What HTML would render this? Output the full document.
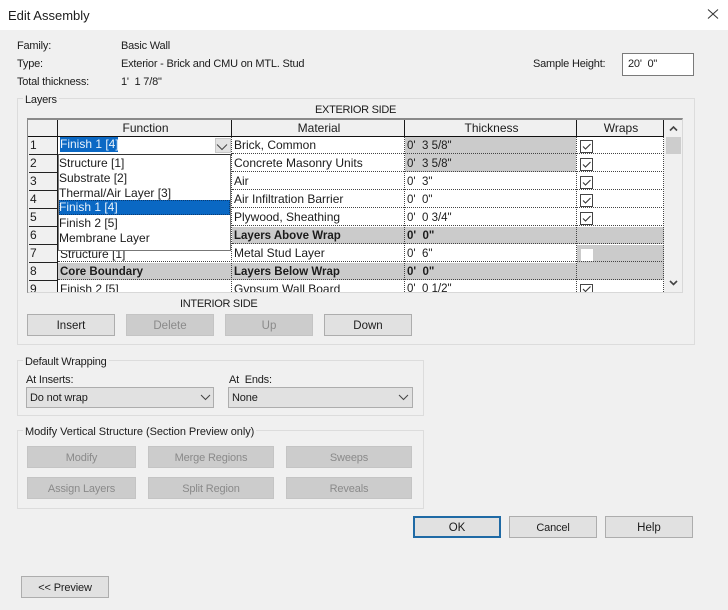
<!DOCTYPE html>
<html><head><meta charset="utf-8">
<style>
html,body{margin:0;padding:0}
body{width:728px;height:610px;overflow:hidden;position:relative;background:#f0f0f0;font-family:"Liberation Sans",sans-serif;font-size:11px;color:#1c1c1c}
div{position:absolute;box-sizing:border-box}
.t{white-space:nowrap;line-height:16px;height:16px;letter-spacing:-.2px}
.h{font-size:12px;line-height:14px;height:14px;letter-spacing:0;text-align:center}
.g{border:1px solid #dcdcdc}
.l{background:#f0f0f0;padding:0 2px 0 2px}
.b{background:#e1e1e1;border:1px solid #adadad;text-align:center;line-height:22px;height:22px;white-space:nowrap;letter-spacing:-.15px}
.d{background:#cccccc;border:1px solid #c4c4c4;color:#8a8a8a;text-align:center;line-height:22px;height:22px;white-space:nowrap;letter-spacing:-.15px}
.m{font-size:11.5px;letter-spacing:0}
.r{height:18px;border-bottom:1px dotted #444}
.cell{line-height:19px;height:17px;white-space:nowrap;font-size:12px}
.th{font-size:11.5px;line-height:21px}
.bd{font-weight:bold;font-size:11.5px;line-height:21px}
.v{background:#1a1a1a;width:1px}
.vd{border-left:1px dotted #444;width:1px}
.cb{left:580px;width:13px;height:13px;border:1px solid #444;background:#fff}
svg{position:absolute;left:0;top:0}
</style></head><body>
<div style="left:0;top:0;width:728px;height:30px;background:#fff"></div>
<div class="t" style="left:8px;top:7px;font-size:13px;line-height:17px;height:17px;letter-spacing:0">Edit Assembly</div>
<svg style="left:707px;top:8px" width="14" height="14"><path d="M1 1.5 L11 10.5 M11 1.5 L1 10.5" stroke="#333" stroke-width="1" fill="none"/></svg>

<div class="t" style="left:17px;top:38px">Family:</div>
<div class="t" style="left:121px;top:38px">Basic Wall</div>
<div class="t" style="left:17px;top:56px">Type:</div>
<div class="t" style="left:121px;top:56px">Exterior - Brick and CMU on MTL. Stud</div>
<div class="t" style="left:17px;top:74px">Total thickness:</div>
<div class="t" style="left:121px;top:74px">1'&nbsp; 1 7/8"</div>
<div class="t" style="left:533px;top:56px">Sample Height:</div>
<div style="left:622px;top:53px;width:72px;height:23px;background:#fff;border:1px solid #7a7a7a"></div>
<div class="t" style="left:628px;top:56px">20'&nbsp; 0"</div>

<div class="g" style="left:17px;top:98px;width:678px;height:247px"></div>
<div class="t l" style="left:23px;top:92px">Layers</div>
<div class="t" style="left:315px;top:102px;letter-spacing:-.3px">EXTERIOR SIDE</div>

<!-- table -->
<div style="left:27px;top:118px;width:656px;height:175px;background:#fff;border:1px solid #d8d8d8;border-top:2px solid #8a8a8a;border-left:2px solid #8a8a8a"></div>
<div style="left:28px;top:120px;width:636px;height:16px;background:#f0f0f0"></div>
<div style="left:28px;top:136px;width:636px;height:1px;background:#111"></div>
<div style="left:28px;top:137px;width:30px;height:155px;background:#f0f0f0"></div>
<div style="left:664px;top:120px;width:18px;height:172px;background:#f0f0f0"></div>
<div style="left:666px;top:137px;width:15px;height:17px;background:#cdcdcd"></div>
<svg style="left:668px;top:124px" width="12" height="10"><path d="M2 6.5 L5.5 3 L9 6.5" stroke="#444" stroke-width="1.6" fill="none"/></svg>
<svg style="left:668px;top:278px" width="12" height="10"><path d="M2 3 L5.5 6.5 L9 3" stroke="#444" stroke-width="1.6" fill="none"/></svg>

<!-- gray fills -->
<div style="left:405px;top:137px;width:171px;height:35px;background:#cbcbcb"></div>
<div style="left:232px;top:227px;width:432px;height:17px;background:#cbcbcb"></div>
<div style="left:58px;top:263px;width:606px;height:17px;background:#cbcbcb"></div>
<div style="left:577px;top:245px;width:87px;height:18px;background:#cbcbcb"></div>

<!-- row lines -->
<div class="r" style="left:232px;top:136px;width:432px"></div>
<div class="r" style="left:232px;top:154px;width:432px"></div>
<div class="r" style="left:232px;top:172px;width:432px"></div>
<div class="r" style="left:232px;top:190px;width:432px"></div>
<div class="r" style="left:232px;top:208px;width:432px"></div>
<div class="r" style="left:232px;top:226px;width:432px"></div>
<div class="r" style="left:58px;top:244px;width:606px"></div>
<div class="r" style="left:58px;top:262px;width:606px"></div>
<div style="left:58px;top:154px;width:174px;height:1px;background:#444"></div>

<!-- row number lines -->
<div style="left:29px;top:154px;width:29px;height:1px;background:#222"></div>
<div style="left:29px;top:172px;width:29px;height:1px;background:#222"></div>
<div style="left:29px;top:190px;width:29px;height:1px;background:#222"></div>
<div style="left:29px;top:208px;width:29px;height:1px;background:#222"></div>
<div style="left:29px;top:226px;width:29px;height:1px;background:#222"></div>
<div style="left:29px;top:244px;width:29px;height:1px;background:#222"></div>
<div style="left:29px;top:262px;width:29px;height:1px;background:#222"></div>
<div style="left:29px;top:280px;width:29px;height:1px;background:#222"></div>

<!-- vertical lines -->
<div class="v" style="left:57px;top:120px;height:172px"></div>
<div class="v" style="left:231px;top:120px;height:17px"></div>
<div class="v" style="left:404px;top:120px;height:17px"></div>
<div class="v" style="left:576px;top:120px;height:17px"></div>
<div class="v" style="left:663px;top:120px;height:17px"></div>
<div class="vd" style="left:231px;top:137px;height:155px"></div>
<div class="vd" style="left:404px;top:137px;height:155px"></div>
<div class="vd" style="left:576px;top:137px;height:155px"></div>
<div class="vd" style="left:663px;top:137px;height:155px"></div>

<!-- headers -->
<div class="t h" style="left:59px;top:121px;width:173px">Function</div>
<div class="t h" style="left:233px;top:121px;width:172px">Material</div>
<div class="t h" style="left:406px;top:121px;width:171px">Thickness</div>
<div class="t h" style="left:578px;top:121px;width:86px">Wraps</div>

<!-- numbers -->
<div class="cell" style="left:30px;top:136px">1</div>
<div class="cell" style="left:30px;top:154px">2</div>
<div class="cell" style="left:30px;top:172px">3</div>
<div class="cell" style="left:30px;top:190px">4</div>
<div class="cell" style="left:30px;top:208px">5</div>
<div class="cell" style="left:30px;top:226px">6</div>
<div class="cell" style="left:30px;top:244px">7</div>
<div class="cell" style="left:30px;top:262px">8</div>
<div style="left:29px;top:281px;width:28px;height:11px;overflow:hidden"><div class="cell" style="left:1px;top:-1px">9</div></div>

<!-- function col -->
<div class="cell" style="left:60px;top:245px">Structure [1]</div>
<div class="cell bd" style="left:60px;top:262px">Core Boundary</div>
<div style="left:58px;top:281px;width:170px;height:11px;overflow:hidden"><div class="cell" style="left:2px;top:-1px">Finish 2 [5]</div></div>

<!-- material col -->
<div class="cell" style="left:234px;top:136px">Brick, Common</div>
<div class="cell" style="left:234px;top:154px">Concrete Masonry Units</div>
<div class="cell" style="left:234px;top:172px">Air</div>
<div class="cell" style="left:234px;top:190px">Air Infiltration Barrier</div>
<div class="cell" style="left:234px;top:208px">Plywood, Sheathing</div>
<div class="cell bd" style="left:234px;top:226px">Layers Above Wrap</div>
<div class="cell" style="left:234px;top:244px">Metal Stud Layer</div>
<div class="cell bd" style="left:234px;top:262px">Layers Below Wrap</div>
<div style="left:232px;top:281px;width:170px;height:11px;overflow:hidden"><div class="cell" style="left:2px;top:-1px">Gypsum Wall Board</div></div>

<!-- thickness col -->
<div class="cell th" style="left:407px;top:136px">0'&nbsp; 3 5/8"</div>
<div class="cell th" style="left:407px;top:154px">0'&nbsp; 3 5/8"</div>
<div class="cell th" style="left:407px;top:172px">0'&nbsp; 3"</div>
<div class="cell th" style="left:407px;top:190px">0'&nbsp; 0"</div>
<div class="cell th" style="left:407px;top:208px">0'&nbsp; 0 3/4"</div>
<div class="cell bd" style="left:407px;top:226px">0'&nbsp; 0"</div>
<div class="cell th" style="left:407px;top:244px">0'&nbsp; 6"</div>
<div class="cell bd" style="left:407px;top:262px">0'&nbsp; 0"</div>
<div style="left:405px;top:281px;width:170px;height:11px;overflow:hidden"><div class="cell th" style="left:2px;top:-2px">0'&nbsp; 0 1/2"</div></div>

<!-- checkboxes -->
<div class="cb" style="top:140px"></div>
<div class="cb" style="top:158px"></div>
<div class="cb" style="top:176px"></div>
<div class="cb" style="top:194px"></div>
<div class="cb" style="top:212px"></div>
<div style="left:581px;top:249px;width:12px;height:12px;background:#fff"></div>
<div style="left:580px;top:284px;width:13px;height:8px;border:1px solid #444;border-bottom:0;background:#fff"></div>
<svg style="left:580px;top:140px" width="14" height="153"><g stroke="#333" stroke-width="1.1" fill="none"><path d="M3 6.5 L5.5 9 L10.5 4"/><path d="M3 24.5 L5.5 27 L10.5 22"/><path d="M3 42.5 L5.5 45 L10.5 40"/><path d="M3 60.5 L5.5 63 L10.5 58"/><path d="M3 78.5 L5.5 81 L10.5 76"/><path d="M3 149 L5.5 151.5 L10.5 146.5"/></g></svg>

<!-- active function cell -->
<div style="left:58px;top:137px;width:173px;height:17px;background:#fff"></div>
<div style="left:60px;top:137px;width:58px;height:15px;background:#0a68c4"></div>
<div class="cell" style="left:60px;top:135px;color:#e8f2fb">Finish 1 [4]</div>
<div style="left:215px;top:138px;width:16px;height:15px;background:#e3e3e3;border:1px solid #c8c8c8"></div>
<svg style="left:215px;top:143px" width="14" height="10"><path d="M2 1.5 L7 6.5 L12 1.5" stroke="#444" stroke-width="1" fill="none"/></svg>

<!-- dropdown -->
<div style="left:58px;top:154px;width:173px;height:97px;background:#fff;border:1px solid #777;border-top:1px solid #333"></div>
<div style="left:59px;top:200px;width:171px;height:15px;background:#0a68c4;border:1px dotted #0a3a70"></div>
<div class="cell" style="left:59px;top:154px">Structure [1]</div>
<div class="cell" style="left:59px;top:169px">Substrate [2]</div>
<div class="cell" style="left:59px;top:184px">Thermal/Air Layer [3]</div>
<div class="cell" style="left:59px;top:198px;color:#e8f2fb">Finish 1 [4]</div>
<div class="cell" style="left:59px;top:214px">Finish 2 [5]</div>
<div class="cell" style="left:59px;top:229px">Membrane Layer</div>

<div class="t" style="left:180px;top:296px;letter-spacing:-.3px">INTERIOR SIDE</div>
<div class="b m" style="left:27px;top:314px;width:88px">Insert</div>
<div class="d m" style="left:126px;top:314px;width:88px">Delete</div>
<div class="d m" style="left:225px;top:314px;width:88px">Up</div>
<div class="b m" style="left:324px;top:314px;width:88px">Down</div>

<!-- default wrapping -->
<div class="g" style="left:17px;top:360px;width:407px;height:56px"></div>
<div class="t l" style="left:23px;top:354px">Default Wrapping</div>
<div class="t" style="left:26px;top:372px">At Inserts:</div>
<div class="t" style="left:229px;top:372px">At&nbsp; Ends:</div>
<div class="b" style="left:26px;top:387px;width:188px;height:21px;line-height:20px;text-align:left;padding-left:3px">Do not wrap</div>
<div class="b" style="left:228px;top:387px;width:185px;height:21px;line-height:20px;text-align:left;padding-left:3px">None</div>
<svg style="left:200px;top:394px" width="12" height="8"><path d="M1 1 L5.5 5.5 L10 1" stroke="#444" stroke-width="1" fill="none"/></svg>
<svg style="left:398px;top:394px" width="12" height="8"><path d="M1 1 L5.5 5.5 L10 1" stroke="#444" stroke-width="1" fill="none"/></svg>

<!-- modify -->
<div class="g" style="left:17px;top:430px;width:407px;height:79px"></div>
<div class="t l" style="left:23px;top:424px;letter-spacing:-.05px">Modify Vertical Structure (Section Preview only)</div>
<div class="d" style="left:27px;top:446px;width:109px">Modify</div>
<div class="d" style="left:148px;top:446px;width:126px">Merge Regions</div>
<div class="d" style="left:286px;top:446px;width:126px">Sweeps</div>
<div class="d" style="left:27px;top:477px;width:109px">Assign Layers</div>
<div class="d" style="left:148px;top:477px;width:126px">Split Region</div>
<div class="d" style="left:286px;top:477px;width:126px">Reveals</div>

<!-- footer -->
<div class="b m" style="left:413px;top:516px;width:88px;line-height:20px;border:2px solid #1f6aa5">OK</div>
<div class="b" style="left:509px;top:516px;width:88px">Cancel</div>
<div class="b m" style="left:605px;top:516px;width:88px">Help</div>
<div class="b" style="left:21px;top:576px;width:88px">&lt;&lt; Preview</div>
</body></html>
